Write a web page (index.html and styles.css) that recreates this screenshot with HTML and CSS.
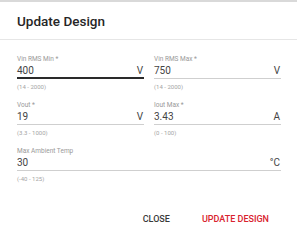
FILE: index.html
```html
<!DOCTYPE html>
<html lang="en">
<head>
    <meta charset="UTF-8">
    <meta name="viewport" content="width=device-width, initial-scale=1.0">
    <title>Update Design</title>
    <link rel="stylesheet" href="styles.css">
</head>
<body>
    <div class="dialog">
        <div class="dialog-title">Update Design</div>
        <form class="dialog-form">
            <div class="field">
                <label>Vin RMS Min *</label>
                <div class="input-row focused">
                    <span class="value">400</span>
                    <span class="unit">V</span>
                </div>
                <div class="helper">(14 - 2000)</div>
            </div>
            <div class="field">
                <label>Vin RMS Max *</label>
                <div class="input-row">
                    <span class="value">750</span>
                    <span class="unit">V</span>
                </div>
                <div class="helper">(14 - 2000)</div>
            </div>
            <div class="field">
                <label>Vout *</label>
                <div class="input-row">
                    <span class="value">19</span>
                    <span class="unit">V</span>
                </div>
                <div class="helper">(3.3 - 1000)</div>
            </div>
            <div class="field">
                <label>Iout Max *</label>
                <div class="input-row">
                    <span class="value">3.43</span>
                    <span class="unit">A</span>
                </div>
                <div class="helper">(0 - 100)</div>
            </div>
            <div class="field wide">
                <label>Max Ambient Temp</label>
                <div class="input-row">
                    <span class="value">30</span>
                    <span class="unit">°C</span>
                </div>
                <div class="helper">(-40 - 125)</div>
            </div>
        </form>
        <div class="dialog-actions">
            <button class="btn">Close</button>
            <button class="btn primary">Update Design</button>
        </div>
    </div>
</body>
</html>
```

FILE: styles.css
```css
body {
    font-family: 'Roboto', 'Liberation Sans', sans-serif;
    margin: 0;
    padding: 0;
    background-color: #d9d9d9;
    color: #333;
}
.dialog {
    margin-top: 2px;
    background-color: #fff;
    height: 238px;
}
.dialog-title {
    height: 37px;
    display: flex;
    align-items: center;
    padding: 0 17px;
    font-size: 13.5px;
    font-weight: 500;
    color: #262626;
    border-bottom: 1px solid #e6e6e6;
}
.dialog-form {
    display: grid;
    grid-template-columns: 1fr 1fr;
    column-gap: 10px;
    row-gap: 10px;
    padding: 15px 16px 0 17px;
}
.field.wide {
    grid-column: 1 / 3;
}
.field label {
    display: block;
    font-size: 6.5px;
    line-height: 8px;
    color: #999;
}
.field .input-row {
    display: flex;
    justify-content: space-between;
    align-items: center;
    height: 15px;
    font-size: 10px;
    color: #444;
    border-bottom: 1px solid #cfcfcf;
}
.field .input-row.focused {
    border-bottom: 2px solid #2a2a2a;
    height: 14px;
}
.field .unit {
    padding-right: 1px;
}
.field .helper {
    font-size: 6px;
    line-height: 8px;
    margin-top: 4px;
    color: #a5a5a5;
}
.dialog-actions {
    display: flex;
    justify-content: flex-end;
    gap: 16px;
    padding: 27px 20px 0 0;
}
.btn {
    background: none;
    border: none;
    padding: 4px 8px;
    font-family: inherit;
    font-size: 9px;
    font-weight: 500;
    text-transform: uppercase;
    color: #3a3a3a;
    cursor: pointer;
}
.btn.primary {
    color: #d9232e;
}
```
